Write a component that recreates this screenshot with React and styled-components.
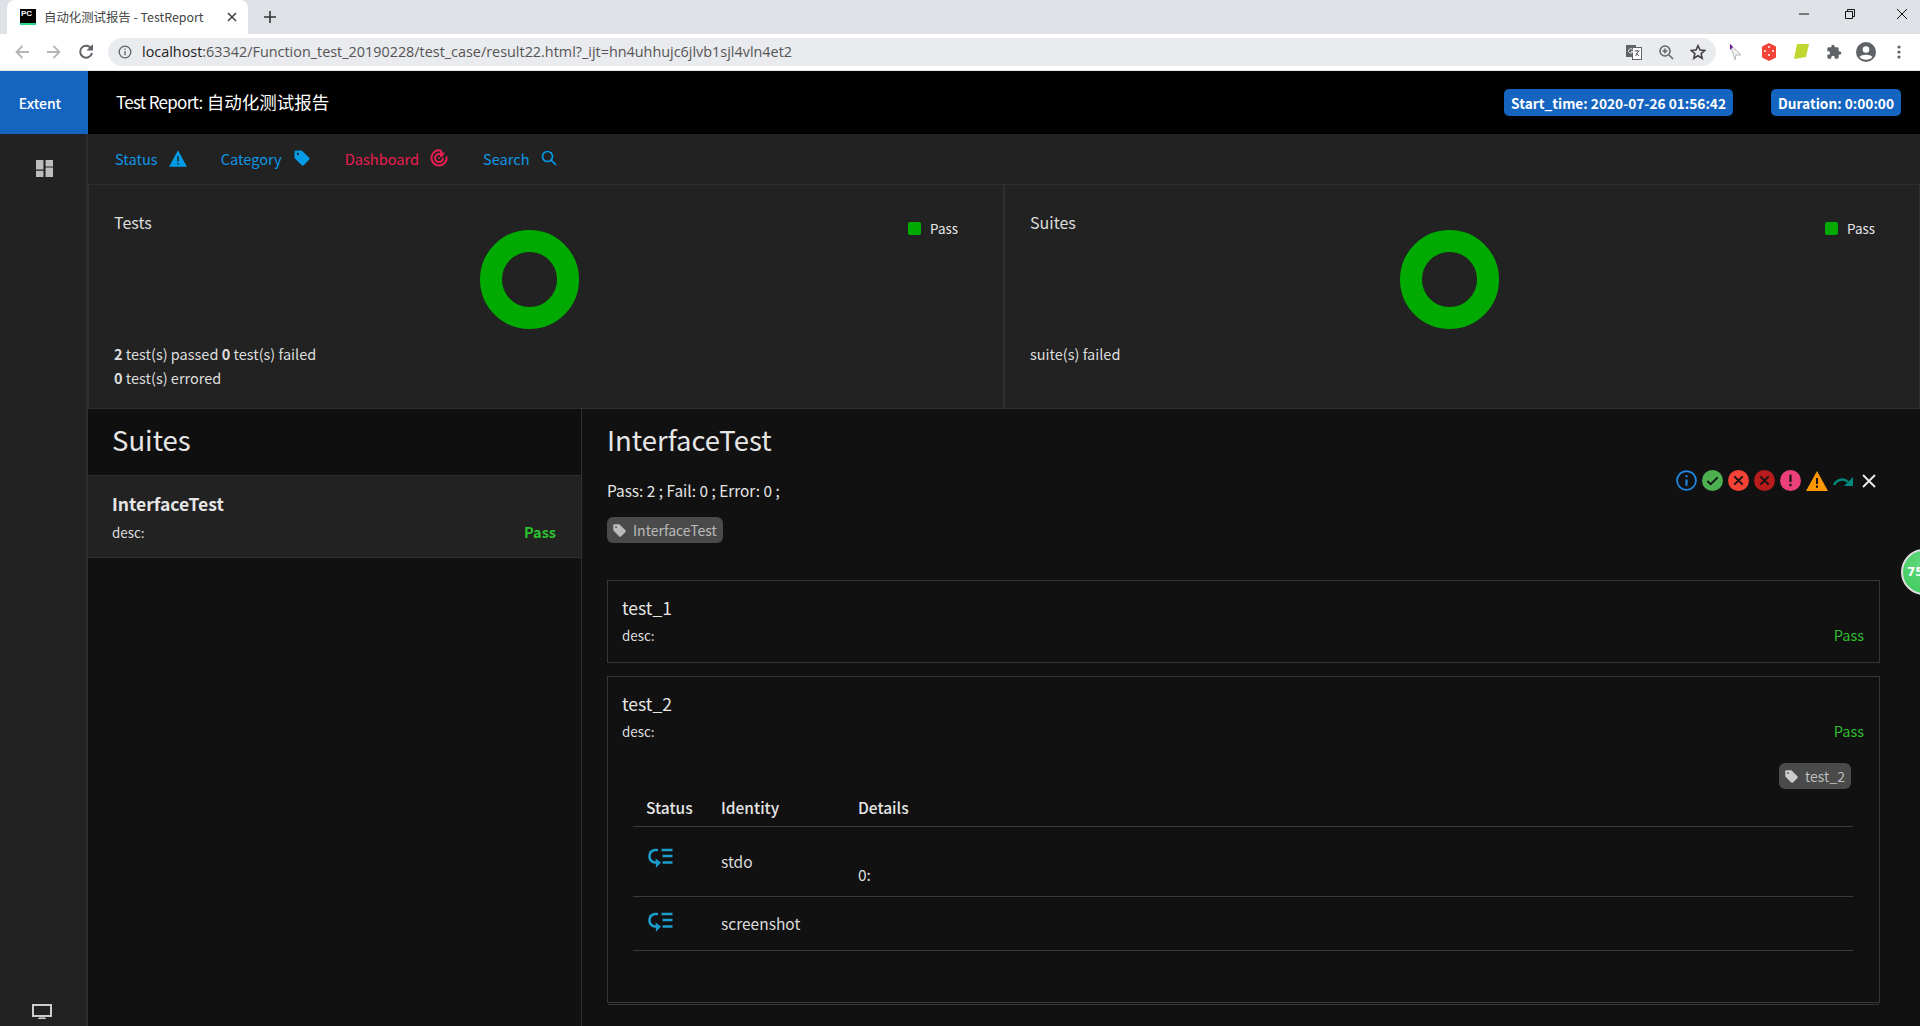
import React from "react";
import styled, { createGlobalStyle } from "styled-components";

const Global = createGlobalStyle`
  html, body { margin: 0; padding: 0; height: 1026px; overflow: hidden; background: #111; }
  * { box-sizing: border-box; }
  #root { height: 1026px; }
`;
const FONT = `"Noto Sans CJK SC", "Noto Sans", sans-serif`;
const Page = styled.div`width:1920px;height:1026px;display:flex;flex-direction:column;overflow:hidden;position:relative;font-family:${FONT};color:#e8e8e8;`;

const TabStrip = styled.div`height:34px;background:#dee1e6;display:flex;align-items:flex-end;padding-left:7px;position:relative;`;
const Tab = styled.div`width:241px;height:34px;background:#fff;border-radius:8px 8px 0 0;display:flex;align-items:center;padding:0 11px 0 13px;font:12.4px "Noto Sans CJK SC","Open Sans",sans-serif;color:#444;`;
const Favicon = styled.div`width:16px;height:16px;background:#000;border-bottom:2px solid #21d789;color:#fff;font:700 8px "Liberation Sans",sans-serif;padding:1px;margin-right:8px;flex:none;line-height:8px;`;
const TabTitle = styled.span`flex:1;white-space:nowrap;`;
const TabAdd = styled.div`width:34px;display:flex;align-items:center;justify-content:center;height:34px;margin-left:5px;`;
const WinControls = styled.div`position:absolute;right:0;top:0;height:28px;display:flex;`;
const WinBtn = styled.div`width:${p=>p.$w}px;height:28px;display:flex;align-items:center;justify-content:center;margin-right:${p=>p.$mr||0}px;`;

const Toolbar = styled.div`height:37px;background:#fff;display:flex;align-items:center;padding-left:6px;border-bottom:1px solid #e6e6e6;`;
const NavBtn = styled.div`width:32px;height:28px;display:flex;align-items:center;justify-content:center;`;
const Omni = styled.div`width:1608px;height:28px;border-radius:14px;background:#e9ebee;display:flex;align-items:center;padding:0 10px;font:14.4px "Open Sans",sans-serif;color:#555;margin-left:6px;flex:none;`;
const OmniText = styled.div`flex:1;margin-left:10px;white-space:nowrap;padding-bottom:1px;`;
const Dark = styled.span`color:#222;`;
const OmniIcons = styled.div`display:flex;gap:16px;align-items:center;`;
const ExtIcons = styled.div`display:flex;align-items:center;margin-left:4px;`;
const ExtSlot = styled.div`width:32.5px;display:flex;align-items:center;justify-content:center;`;

const Body = styled.div`flex:1;display:flex;flex-direction:column;min-height:0;`;
const Header = styled.div`height:63px;background:#000;display:flex;align-items:center;`;
const BrandBox = styled.div`width:88px;height:100%;background:#1565c0;display:flex;align-items:center;justify-content:center;font-size:14px;font-weight:500;color:#fff;padding-right:8px;`;
const ReportTitle = styled.div`flex:1;padding:0 0 2px 28px;font-size:17px;color:#fff;letter-spacing:-0.7px;`;
const TitleCjk = styled.span`font-size:17.5px;letter-spacing:0;margin-left:1px;`;
const Badge = styled.div`height:27px;background:#1565c0;border-radius:5px;padding:0 7px;display:flex;align-items:center;font-size:13.7px;font-weight:700;color:#fff;margin-left:${p=>p.$ml||0}px;margin-right:${p=>p.$mr||0}px;white-space:nowrap;`;

const Main = styled.div`flex:1;display:flex;min-height:0;`;
const Side = styled.div`width:88px;background:#222;border-right:2px solid #2c2c2c;display:flex;flex-direction:column;align-items:center;justify-content:space-between;padding:26px 1px 6px 1px;flex:none;`;
const SideTop = styled.div`margin-left:3px;line-height:0;`;
const SideBottom = styled.div`margin-left:-2px;line-height:0;`;
const Content = styled.div`flex:1;display:flex;flex-direction:column;min-width:0;background:#111;`;
const Nav = styled.div`height:50px;background:#222;display:flex;align-items:center;padding:0 0 2px 27px;flex:none;`;
const NavItem = styled.div`display:flex;align-items:center;gap:11px;font-size:14.6px;color:${p=>p.$c};margin-right:${p=>p.$mr}px;`;

const Cards = styled.div`height:225px;display:grid;grid-template-columns:916px 916px;flex:none;`;
const Card = styled.div`background:#222;border:1px solid #2f2f2f;padding:0 25px;position:relative;display:flex;flex-direction:column;`;
const CardTitle = styled.div`font-size:16px;margin-top:25px;line-height:24px;color:#ddd;`;
const Chart = styled.div`height:99px;display:flex;justify-content:center;margin-top:-4px;padding-right:${p=>p.$pr}px;`;
const Legend = styled.div`position:absolute;top:33px;right:${p=>p.$r}px;display:flex;align-items:center;gap:9px;font-size:13.4px;color:#e8e8e8;`;
const Swatch = styled.span`width:13px;height:13px;background:#0a0;display:block;border-radius:2px;`;
const Stats = styled.div`margin-top:13px;font-size:14.5px;line-height:24px;color:#ddd;`;
const Strong = styled.b`font-weight:700;`;

const Lower = styled.div`flex:1;display:flex;min-height:0;`;
const List = styled.div`width:494px;border-right:1px solid #2f2f2f;flex:none;background:#111;`;
const ListHead = styled.div`height:67px;background:#0f0f0f;border-bottom:1px solid #2f2f2f;font-size:27.5px;display:flex;align-items:center;padding:0 0 7px 24px;color:#e6e6e6;`;
const ListItem = styled.div`height:82px;background:#222;border-bottom:1px solid #2f2f2f;padding:14px 25px 0 24px;`;
const ItemName = styled.div`font-size:17.5px;font-weight:700;line-height:28px;color:#e6e6e6;`;
const ItemRow = styled.div`display:flex;justify-content:space-between;font-size:13.4px;line-height:22px;color:#ddd;margin-top:3px;`;
const PassText = styled.span`color:#2dc02d;font-weight:${p=>p.$w||400};font-size:14.5px;`;

const Detail = styled.div`flex:1;padding:0 40px 0 25px;position:relative;min-width:0;`;
const DetailTitle = styled.div`font-size:27.5px;line-height:40px;margin-top:10px;color:#e6e6e6;`;
const DetailLine = styled.div`font-size:15.4px;line-height:24px;margin-top:19px;color:#e6e6e6;`;
const Tag = styled.div`display:inline-flex;align-items:center;gap:6px;height:26px;border-radius:6px;background:#4a4a4a;padding:0 6px 0 5px;font-size:14px;color:#bbb;`;
const TagWrap = styled.div`margin-top:15px;height:26px;`;
const Filters = styled.div`position:absolute;right:44px;top:61px;display:flex;align-items:center;gap:5px;`;
const CloseIcon = styled.svg`margin-left:3px;`;
const TestBox = styled.div`border:1px solid #363636;padding:14px 15px 0 14px;margin-bottom:13px;height:${p=>p.$h}px;margin-top:${p=>p.$mt||0}px;background:#111;box-shadow:${p=>p.$sh?"0 2px 0 -1px #111, 0 3px 0 -1px #363636":"none"};`;
const TestName = styled.div`font-size:17.5px;line-height:26px;color:#e6e6e6;`;
const TestRow = styled.div`display:flex;justify-content:space-between;font-size:13.4px;line-height:24px;color:#ddd;margin-top:2px;`;
const TagRight = styled.div`display:flex;justify-content:flex-end;margin-top:20px;padding-right:13px;`;
const Table = styled.table`border-collapse:collapse;width:1220px;margin:0 0 0 11px;table-layout:fixed;font-size:15.5px;color:#ddd;`;
const Th = styled.th`text-align:left;font-weight:500;font-size:15.5px;height:37px;padding:0 0 0 13px;border-bottom:1px solid #3a3a3a;width:${p=>p.$w}px;color:#e6e6e6;`;
const Td = styled.td`padding:${p=>p.$p||"0 0 0 13px"};height:${p=>p.$h}px;border-bottom:1px solid #3a3a3a;vertical-align:${p=>p.$va||"middle"};`;
const IconBox = styled.div`line-height:0;margin-left:1px;`;
const FloatBall = styled.div`position:absolute;left:1901px;top:549px;width:46px;height:46px;border-radius:50%;background:radial-gradient(circle at 50% 30%,#62d97c,#3cc95c);border:2px solid #ddd;font:700 12px "DejaVu Sans",sans-serif;color:#fff;display:flex;align-items:center;padding-left:4px;`;

const RunIcon = () => (
  <svg width="26" height="20" viewBox="0 0 26 20" fill="none" stroke="#1c9ccc">
    <path d="M11 2H7.5A6.4 6.4 0 0 0 7.5 14.5H10" strokeWidth="2.6" />
    <path d="M8.6 10.5L14 14.5L9 19.8z" fill="#1c9ccc" stroke="none" />
    <path d="M14.5 2h11M15.5 8h10M15.5 14.5h10" strokeWidth="2.6" />
  </svg>
);
const TagIcon = ({ c, s = 16 }) => (
  <svg width={s} height={s} viewBox="0 0 24 24" fill={c}>
    <path d="M2 3.5A1.5 1.5 0 0 1 3.5 2H11c.6 0 1.1.2 1.5.6l9 9c.8.8.8 2 0 2.8l-7.1 7.1c-.8.8-2 .8-2.8 0l-9-9A2 2 0 0 1 2 11z M6.5 5A1.5 1.5 0 1 0 6.5 8 1.5 1.5 0 0 0 6.5 5z" fillRule="evenodd" />
  </svg>
);
const Donut = () => (
  <svg width="99" height="99" viewBox="0 0 99 99"><circle cx="49.5" cy="49.5" r="38.5" fill="none" stroke="#0a0" strokeWidth="22" /></svg>
);
const Circle = ({ c, children }) => (
  <svg width="21" height="21" viewBox="0 0 20 20"><circle cx="10" cy="10" r="10" fill={c} />{children}</svg>
);
const X = () => <path d="M6 6l8 8M14 6l-8 8" stroke="#111" strokeWidth="1.8" />;

export default function App() {
  return (
    <Page>
      <Global />
      <TabStrip>
        <Tab>
          <Favicon>PC</Favicon>
          <TabTitle>自动化测试报告 - TestReport</TabTitle>
          <svg width="10" height="10" viewBox="0 0 10 10" stroke="#444" strokeWidth="1.6"><path d="M1 1l8 8M9 1l-8 8" /></svg>
        </Tab>
        <TabAdd><svg width="12" height="12" viewBox="0 0 12 12" stroke="#333" strokeWidth="1.6"><path d="M6 0v12M0 6h12" /></svg></TabAdd>
        <WinControls>
          <WinBtn $w={46}><svg width="10" height="2"><path d="M0 1h10" stroke="#111" /></svg></WinBtn>
          <WinBtn $w={46} $mr={10}><svg width="10" height="10" fill="none" stroke="#111"><path d="M.5 2.5h7v7h-7zM2.5 2.5v-2h7v7h-2" /></svg></WinBtn>
          <WinBtn $w={37}><svg width="10" height="10" stroke="#111"><path d="M0 0l10 10M10 0l-10 10" /></svg></WinBtn>
        </WinControls>
      </TabStrip>
      <Toolbar>
        <NavBtn><svg width="14" height="14" fill="none" stroke="#b5b5b5" strokeWidth="1.8"><path d="M14 7H1.5M7.5 1l-6 6 6 6" /></svg></NavBtn>
        <NavBtn><svg width="14" height="14" fill="none" stroke="#b5b5b5" strokeWidth="1.8"><path d="M0 7h12.5M6.5 1l6 6-6 6" /></svg></NavBtn>
        <NavBtn><svg width="16" height="16" viewBox="0 0 16 16" fill="none" stroke="#5f6368" strokeWidth="2"><path d="M13.5 5A6 6 0 1 0 14 9" /><path d="M15 0v6.5H8.5z" fill="#5f6368" stroke="none" /></svg></NavBtn>
        <Omni>
          <svg width="14" height="14" viewBox="0 0 14 14" fill="none" stroke="#5f6368" strokeWidth="1.3"><circle cx="7" cy="7" r="5.8" /><path d="M7 6v4.2M7 3.5v1.3" /></svg>
          <OmniText><Dark>localhost</Dark>:63342/Function_test_20190228/test_case/result22.html?_ijt=hn4uhhujc6jlvb1sjl4vln4et2</OmniText>
          <OmniIcons>
            <svg width="16" height="16" viewBox="0 0 16 16"><rect x="0" y="1" width="10" height="12" fill="#5f6368" /><rect x="6.5" y="3.5" width="9" height="12" fill="#fff" stroke="#5f6368" /><path d="M8.5 7h5M11 6v1M9.5 12l3-5M10 9l3 3" stroke="#5f6368" fill="none" /><path d="M6.5 5.5a2.2 2.2 0 1 0 .4 2H5" stroke="#eee" fill="none" /></svg>
            <svg width="16" height="16" viewBox="0 0 16 16" fill="none" stroke="#5f6368" strokeWidth="1.5"><circle cx="7" cy="7" r="5" /><path d="M11 11l4 4M7 4.5v5M4.5 7h5" /></svg>
            <svg width="16" height="16" viewBox="0 0 24 24" fill="none" stroke="#444" strokeWidth="2.4"><path d="M12 2.5l3 6.6 7 .7-5.3 4.6 1.6 7-6.3-3.7-6.3 3.7 1.6-7L2 9.8l7-.7z" /></svg>
          </OmniIcons>
        </Omni>
        <ExtIcons>
          <ExtSlot><svg width="14" height="18" viewBox="0 0 14 18"><path d="M1 1l11 11H7l-1 5z" fill="#eee" stroke="#bbb" /><path d="M1 1l3 3-3 3z" fill="#6a1b9a" /></svg></ExtSlot>
          <ExtSlot><svg width="16" height="18" viewBox="0 0 16 18"><path d="M8 0l7 3.5v11L8 18l-7-3.5v-11z" fill="#f44336" /><circle cx="4" cy="8" r="1" fill="#fff" /><circle cx="12" cy="8" r="1" fill="#fff" /><circle cx="8" cy="12" r="1" fill="#fff" /><circle cx="8" cy="4" r="1" fill="#fff" /></svg></ExtSlot>
          <ExtSlot><svg width="15" height="16" viewBox="0 0 15 16"><path d="M3 0h12l-3 13-12 2z" fill="#c0d72f" /></svg></ExtSlot>
          <ExtSlot><svg width="16" height="16" viewBox="0 0 24 24" fill="#5f6368"><path d="M20.5 11H19V7a2 2 0 0 0-2-2h-4V3.5a2.5 2.5 0 0 0-5 0V5H4a2 2 0 0 0-2 2v3.8h1.5a2.7 2.7 0 0 1 0 5.4H2V20a2 2 0 0 0 2 2h3.8v-1.5a2.7 2.7 0 0 1 5.4 0V22H17a2 2 0 0 0 2-2v-4h1.5a2.5 2.5 0 0 0 0-5z" /></svg></ExtSlot>
          <ExtSlot><svg width="20" height="20" viewBox="0 0 20 20"><circle cx="10" cy="10" r="10" fill="#5f6368" /><circle cx="10" cy="7.5" r="3.3" fill="#fff" /><path d="M3.5 15c2-3 11-3 13 0-3 3.5-10 3.5-13 0z" fill="#fff" /></svg></ExtSlot>
          <ExtSlot><svg width="4" height="14" fill="#5f6368"><circle cx="2" cy="2" r="1.6" /><circle cx="2" cy="7" r="1.6" /><circle cx="2" cy="12" r="1.6" /></svg></ExtSlot>
        </ExtIcons>
      </Toolbar>
      <Body>
        <Header>
          <BrandBox>Extent</BrandBox>
          <ReportTitle>Test Report: <TitleCjk>自动化测试报告</TitleCjk></ReportTitle>
          <Badge>Start_time: 2020-07-26 01:56:42</Badge>
          <Badge $ml={38} $mr={19}>Duration: 0:00:00</Badge>
        </Header>
        <Main>
          <Side>
            <SideTop><svg width="17" height="17" viewBox="0 0 16 16" fill="#bdbdbd"><path d="M0 0h7v9H0zM0 10h7v6H0zM9 0h7v6H9zM9 7h7v9H9z" /></svg></SideTop>
            <SideBottom><svg width="20" height="16" viewBox="0 0 20 16" fill="none"><rect x="1" y="1" width="18" height="11" stroke="#ccc" strokeWidth="2" /><path d="M8 12h4v2H8zM6 14.5h8" stroke="#ccc" /></svg></SideBottom>
          </Side>
          <Content>
            <Nav>
              <NavItem $c="#0f96e6" $mr={34}>Status
                <svg width="18" height="17" viewBox="0 0 24 22" fill="#039be5"><path d="M12 0l12 22H0zM11 8v7h2V8zm0 9v2h2v-2z" fillRule="evenodd" /></svg>
              </NavItem>
              <NavItem $c="#0f96e6" $mr={34}>Category<TagIcon c="#039be5" s={18} /></NavItem>
              <NavItem $c="#e91e50" $mr={35}>Dashboard
                <svg width="18" height="18" viewBox="0 0 18 18" fill="none" stroke="#e91e50" strokeWidth="2"><path d="M11.2 1.6A7.6 7.6 0 1 0 16.5 7.5" /><path d="M10 5.2A4 4 0 1 0 13 9" /><path d="M11 1.5v6.5M14 3.5l-3 4.5M9 8.2v1.6" /></svg>
              </NavItem>
              <NavItem $c="#0f96e6" $mr={0}>Search
                <svg width="16" height="16" viewBox="0 0 16 16" fill="none" stroke="#039be5" strokeWidth="1.7"><circle cx="6.5" cy="6.5" r="5" /><path d="M10 10l5 5" /></svg>
              </NavItem>
            </Nav>
            <Cards>
              <Card>
                <CardTitle>Tests</CardTitle>
                <Legend $r={45}><Swatch />Pass</Legend>
                <Chart $pr={34}><Donut /></Chart>
                <Stats><Strong>2</Strong> test(s) passed <Strong>0</Strong> test(s) failed<br /><Strong>0</Strong> test(s) errored</Stats>
              </Card>
              <Card>
                <CardTitle>Suites</CardTitle>
                <Legend $r={44}><Swatch />Pass</Legend>
                <Chart $pr={26}><Donut /></Chart>
                <Stats>suite(s) failed</Stats>
              </Card>
            </Cards>
            <Lower>
              <List>
                <ListHead>Suites</ListHead>
                <ListItem>
                  <ItemName>InterfaceTest</ItemName>
                  <ItemRow><span>desc:</span><PassText $w={700}>Pass</PassText></ItemRow>
                </ListItem>
              </List>
              <Detail>
                <DetailTitle>InterfaceTest</DetailTitle>
                <DetailLine>Pass: 2 ; Fail: 0 ; Error: 0 ;</DetailLine>
                <TagWrap><Tag><TagIcon c="#bbb" s={15} />InterfaceTest</Tag></TagWrap>
                <Filters>
                  <svg width="21" height="21" viewBox="0 0 20 20" fill="none" stroke="#1e88e5" strokeWidth="1.7"><circle cx="10" cy="10" r="9" /><path d="M10 9v6M10 5v2" strokeWidth="2" /></svg>
                  <Circle c="#4caf50"><path d="M5 10.5l3.3 3L15 7" stroke="#111" strokeWidth="1.8" fill="none" /></Circle>
                  <Circle c="#f44336"><X /></Circle>
                  <Circle c="#b71c1c"><X /></Circle>
                  <Circle c="#ec407a"><path d="M10 4.5v7M10 13v2.5" stroke="#111" strokeWidth="2" /></Circle>
                  <svg width="22" height="20" viewBox="0 0 22 20"><path d="M11 0l11 20H0z" fill="#ff9800" /><path d="M11 7v6M11 14.5v2.2" stroke="#111" strokeWidth="2" /></svg>
                  <svg width="21" height="14" viewBox="0 0 21 14" fill="none"><path d="M1 11c3-6 10-7 14-3" stroke="#00897b" strokeWidth="2.4" /><path d="M20 3v9h-9z" fill="#00897b" /></svg>
                  <CloseIcon width="14" height="14" viewBox="0 0 14 14" stroke="#eee" strokeWidth="1.8"><path d="M1 1l12 12M13 1L1 13" /></CloseIcon>
                </Filters>
                <TestBox $mt={37} $h={83}>
                  <TestName>test_1</TestName>
                  <TestRow><span>desc:</span><PassText>Pass</PassText></TestRow>
                </TestBox>
                <TestBox $h={327} $sh>
                  <TestName>test_2</TestName>
                  <TestRow><span>desc:</span><PassText>Pass</PassText></TestRow>
                  <TagRight><Tag><TagIcon c="#ccc" s={15} />test_2</Tag></TagRight>
                  <Table>
                    <colgroup><col width="75" /><col width="137" /><col /></colgroup>
                    <thead><tr><Th $w={75}>Status</Th><Th $w={137}>Identity</Th><Th>Details</Th></tr></thead>
                    <tbody>
                      <tr><Td $h={70} $va="top" $p="21px 0 0 13px"><IconBox><RunIcon /></IconBox></Td><Td $h={70}>stdo</Td><Td $h={70} $p="26px 0 0 13px">0:</Td></tr>
                      <tr><Td $h={54} $va="top" $p="15px 0 0 13px"><IconBox><RunIcon /></IconBox></Td><Td $h={54}>screenshot</Td><Td $h={54} /></tr>
                    </tbody>
                  </Table>
                </TestBox>
              </Detail>
            </Lower>
          </Content>
        </Main>
      </Body>
      <FloatBall>75</FloatBall>
    </Page>
  );
}
